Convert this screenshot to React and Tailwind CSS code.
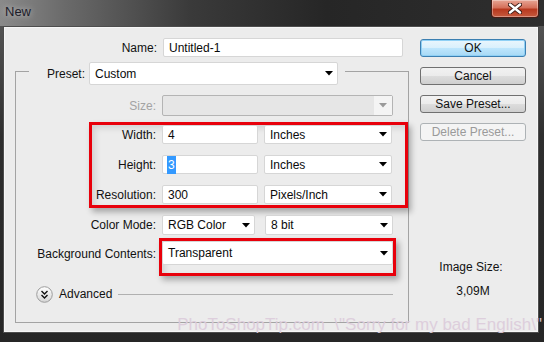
import React from 'react';

const font = { fontFamily: '"Liberation Sans", Arial, sans-serif' };

const Arrow = ({ color = '#000' }) => (
  <svg width="8" height="5" viewBox="0 0 8 5" className="shrink-0">
    <polygon points="0,0 8,0 4,4.5" fill={color} />
  </svg>
);

const Select = ({ className, children, disabled }) => (
  <div
    className={`flex items-center justify-between border rounded-[2px] pl-[5px] pr-[4px] text-[12px] ${
      disabled ? 'bg-[#e6e6e6] border-[#b4b4b4]' : 'bg-white border-[#d6d6d6] text-[#0a0a0a]'
    } ${className}`}
  >
    <span>{children}</span>
    {disabled ? (
      <span className="flex items-center justify-center h-full w-[18px] -mr-[4px] bg-[#f4f4f4]">
        <Arrow color="#9a9a9a" />
      </span>
    ) : (
      <Arrow />
    )}
  </div>
);

const Input = ({ className, children }) => (
  <div className={`flex items-center bg-white border border-[#d6d6d6] rounded-[2px] pl-[5px] text-[12px] text-[#0a0a0a] ${className}`}>
    {children}
  </div>
);

const Button = ({ children, primary, disabled }) => {
  let cls = 'border-[#707070] bg-[linear-gradient(to_bottom,#f2f2f2_0%,#ebebeb_50%,#dddddd_50%,#cfcfcf_100%)] text-[#111]';
  if (primary) cls = 'border-[#3c7fb1] bg-[linear-gradient(to_bottom,#eaf6fd_0%,#d9f0fc_50%,#bee6fd_50%,#a7d9f5_100%)] text-[#111] shadow-[inset_0_0_0_1px_#8fd0f5]';
  if (disabled) cls = 'border-[#adb2b5] bg-[#f4f4f4] text-[#9a9a9a]';
  return (
    <div className={`h-[18px] w-full flex items-center justify-center border rounded-[3px] text-[12px] ${cls}`}>
      {children}
    </div>
  );
};

const Label = ({ className, children, muted }) => (
  <div className={`text-right text-[12px] leading-[16px] ${muted ? 'text-[#a3a3a3]' : 'text-[#111]'} ${className}`}>
    {children}
  </div>
);

const AdvancedIcon = () => (
  <svg width="17" height="17" viewBox="0 0 17 17">
    <defs>
      <linearGradient id="adv" x1="0" y1="0" x2="0" y2="1">
        <stop offset="0" stopColor="#ffffff" />
        <stop offset="1" stopColor="#d4d4d4" />
      </linearGradient>
    </defs>
    <circle cx="8.5" cy="8.5" r="7.8" fill="url(#adv)" stroke="#9c9c9c" strokeWidth="1" />
    <polyline points="5.5,5 8.5,8 11.5,5" fill="none" stroke="#111" strokeWidth="1.4" />
    <polyline points="5.5,9 8.5,12 11.5,9" fill="none" stroke="#111" strokeWidth="1.4" />
  </svg>
);

export default function App() {
  return (
    <div
      className="relative w-[544px] h-[342px] overflow-hidden flex flex-col bg-[linear-gradient(to_bottom,#5c5c5c,#2e2e2e_40%,#262626)]"
      style={font}
    >
      {/* title bar */}
      <div className="h-[26px] flex items-start justify-between bg-[linear-gradient(to_right,#8a8a8a_0%,#6a6a6a_12%,#3a3a3a_35%,#262626_60%,#2e2e2e_100%)]">
        <div className="pl-[5px] pt-[5px] text-[13px] leading-[14px] text-[#1c1c2a] [text-shadow:0_0_6px_rgba(255,255,255,0.6)]">
          New
        </div>
        <div className="mr-[5px] w-[48px] h-[18px] flex items-center justify-center rounded-b-[4px] border border-t-0 border-[#4a1c14] bg-[linear-gradient(to_bottom,#e7a594_0%,#d5705a_45%,#b8391f_55%,#c65a3e_100%)] shadow-[inset_0_0_0_1px_rgba(255,255,255,0.35)]">
          <svg width="14" height="11" viewBox="0 0 14 11">
            <path d="M2 1.5 L12 9.5 M12 1.5 L2 9.5" stroke="#3a1a14" strokeWidth="4.2" strokeLinecap="round" />
            <path d="M2 1.5 L12 9.5 M12 1.5 L2 9.5" stroke="#ffffff" strokeWidth="2.4" strokeLinecap="round" />
          </svg>
        </div>
      </div>

      {/* dialog panel */}
      <div className="px-[3px] pr-[5px]">
        <div className="h-[307px] flex bg-[#ececec] border border-[#4d4d4d] shadow-[inset_0_0_0_1px_#f6f6f6]">
          {/* left column */}
          <div className="w-[416px] flex flex-col">
            <div className="mt-[11px] flex items-center">
              <Label className="w-[153px]">Name:</Label>
              <Input className="ml-[6px] w-[240px] h-[19px]">Untitled-1</Input>
            </div>

            <fieldset className="ml-[11px] w-[386px] border border-[#a3a3a3] pb-[19px]">
              <legend className="ml-[13px] pt-[5px] pr-[7px]">
                <div className="flex items-center pl-[18px]">
                  <Label>Preset:</Label>
                  <Select className="ml-[4px] w-[249px] h-[23px]">Custom</Select>
                </div>
              </legend>

              <div className="mt-[10px] flex items-center">
                <Label className="w-[140px]" muted>Size:</Label>
                <Select className="ml-[6px] w-[231px] h-[21px]" disabled />
              </div>

              <div className="mt-[6px] ml-[73px] w-[319px] border-[3px] border-[#e8000b] pb-[1px] flex flex-col gap-[11px] shadow-[3px_4px_6px_rgba(0,0,0,0.3),inset_3px_3px_6px_rgba(0,0,0,0.12)]">
                <div className="flex items-center">
                  <Label className="w-[64px]">Width:</Label>
                  <Input className="ml-[6px] w-[96px] h-[19px]">4</Input>
                  <Select className="ml-[6px] w-[128px] h-[19px]">Inches</Select>
                </div>
                <div className="flex items-center">
                  <Label className="w-[64px]">Height:</Label>
                  <Input className="ml-[6px] w-[96px] h-[19px] border-[#a9c8e8]">
                    <span className="bg-[#3399ff] text-white px-[1px] -ml-[1px]">3</span>
                  </Input>
                  <Select className="ml-[6px] w-[128px] h-[19px]">Inches</Select>
                </div>
                <div className="flex items-center">
                  <Label className="w-[64px]">Resolution:</Label>
                  <Input className="ml-[6px] w-[96px] h-[19px]">300</Input>
                  <Select className="ml-[6px] w-[128px] h-[19px]">Pixels/Inch</Select>
                </div>
              </div>

              <div className="mt-[7px] flex items-center">
                <Label className="w-[140px]">Color Mode:</Label>
                <Select className="ml-[6px] w-[93px] h-[20px]">RGB Color</Select>
                <Select className="ml-[10px] w-[128px] h-[20px]">8 bit</Select>
              </div>

              <div className="mt-[3px] flex items-start">
                <Label className="w-[140px] mt-[8px]">Background Contents:</Label>
                <div className="ml-[3px] w-[237px] border-[3px] border-[#e8000b] pb-[8px] shadow-[3px_4px_6px_rgba(0,0,0,0.3),inset_3px_3px_6px_rgba(0,0,0,0.12)]">
                  <Select className="w-full h-[24px]">Transparent</Select>
                </div>
              </div>

              <div className="mt-[9px] ml-[20px] mr-[15px] flex items-center">
                <AdvancedIcon />
                <span className="ml-[6px] text-[12px] text-[#111]">Advanced</span>
                <div className="ml-[6px] flex-1 h-px bg-[#b0b0b0]" />
              </div>
            </fieldset>
          </div>

          {/* right column */}
          <div className="w-[106px] mt-[12px] flex flex-col">
            <div className="flex flex-col gap-[10px]">
              <Button primary>OK</Button>
              <Button>Cancel</Button>
              <Button>Save Preset...</Button>
              <Button disabled>Delete Preset...</Button>
            </div>
            <div className="mt-[118px] text-center text-[12px] leading-[16px] text-[#111] -ml-[4px]">Image Size:</div>
            <div className="mt-[8px] text-center text-[12px] leading-[16px] text-[#111]">3,09M</div>
          </div>
        </div>
      </div>

      {/* watermark */}
      <div className="absolute right-[2px] bottom-[7px] text-[17px] leading-[20px] text-[#dccbdb] opacity-90 whitespace-pre" style={{ fontFamily: '"Liberation Sans", Arial, sans-serif' }}>
        {'PhoToShopTip.com  \\"Sorry for my bad English\\"'}
      </div>
    </div>
  );
}
